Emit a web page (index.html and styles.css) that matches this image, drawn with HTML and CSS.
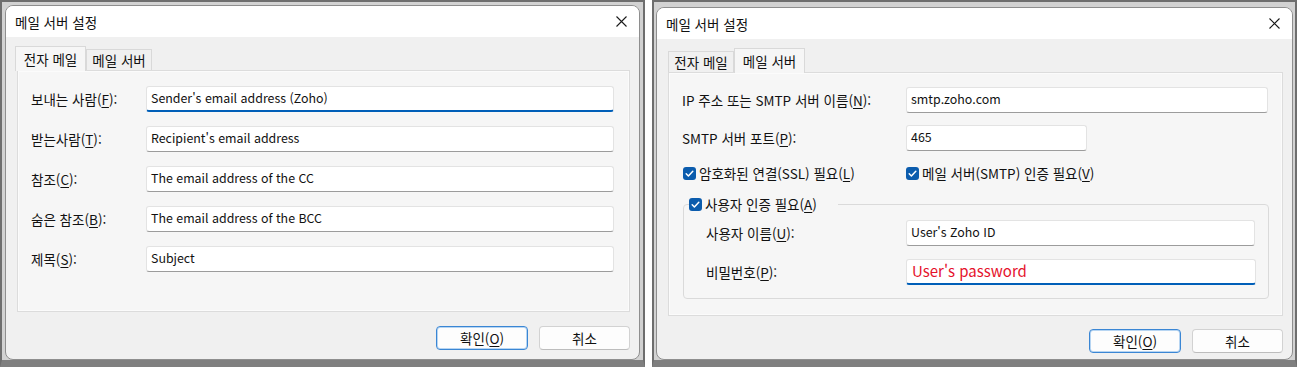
FILE: index.html
```html
<!DOCTYPE html>
<html lang="ko">
<head>
<meta charset="utf-8">
<title>메일 서버 설정</title>
<link rel="stylesheet" href="styles.css">
</head>
<body>
<div class="screen">
  <div class="frame frame-left">
    <div class="dialog">
      <div class="titlebar">
        <span class="title">메일 서버 설정</span>
        <svg class="close" width="11" height="11" viewBox="0 0 11 11"><path d="M0.5 0.5L10.5 10.5M10.5 0.5L0.5 10.5" stroke="#1a1a1a" stroke-width="1.1" fill="none"/></svg>
      </div>
      <div class="body">
        <div class="tabs">
          <div class="tab active first">전자 메일</div>
          <div class="tab">메일 서버</div>
        </div>
        <div class="panel panel-mail">
          <div class="row"><span class="row-label">보내는 사람(<u>F</u>):</span><div class="field focus">Sender's email address (Zoho)</div></div>
          <div class="row"><span class="row-label">받는사람(<u>T</u>):</span><div class="field">Recipient's email address</div></div>
          <div class="row"><span class="row-label">참조(<u>C</u>):</span><div class="field">The email address of the CC</div></div>
          <div class="row"><span class="row-label">숨은 참조(<u>B</u>):</span><div class="field">The email address of the BCC</div></div>
          <div class="row"><span class="row-label">제목(<u>S</u>):</span><div class="field">Subject</div></div>
        </div>
        <div class="buttons buttons-left">
          <div class="btn default">확인(<u>O</u>)</div>
          <div class="btn cancel">취소</div>
        </div>
      </div>
    </div>
  </div>
  <div class="frame frame-right">
    <div class="dialog">
      <div class="titlebar">
        <span class="title">메일 서버 설정</span>
        <svg class="close" width="11" height="11" viewBox="0 0 11 11"><path d="M0.5 0.5L10.5 10.5M10.5 0.5L0.5 10.5" stroke="#1a1a1a" stroke-width="1.1" fill="none"/></svg>
      </div>
      <div class="body">
        <div class="tabs">
          <div class="tab">전자 메일</div>
          <div class="tab active">메일 서버</div>
        </div>
        <div class="panel panel-server">
          <div class="row"><span class="row-label wide">IP 주소 또는 SMTP 서버 이름(<u>N</u>):</span><div class="field f-ip">smtp.zoho.com</div></div>
          <div class="row r-port"><span class="row-label wide">SMTP 서버 포트(<u>P</u>):</span><div class="field f-port">465</div></div>
          <div class="row r-checks">
            <span class="check wide first-check"><span class="cb"><svg width="13" height="13" viewBox="0 0 13 13"><path d="M3.2 6.8L5.4 9L9.8 4.3" stroke="#fff" stroke-width="1.5" fill="none" stroke-linecap="round" stroke-linejoin="round"/></svg></span><span class="check-text">암호화된 연결(SSL) 필요(<u>L</u>)</span></span>
            <span class="check"><span class="cb"><svg width="13" height="13" viewBox="0 0 13 13"><path d="M3.2 6.8L5.4 9L9.8 4.3" stroke="#fff" stroke-width="1.5" fill="none" stroke-linecap="round" stroke-linejoin="round"/></svg></span><span class="check-text">메일 서버(SMTP) 인증 필요(<u>V</u>)</span></span>
          </div>
          <fieldset class="group">
            <legend class="check legend"><span class="cb"><svg width="13" height="13" viewBox="0 0 13 13"><path d="M3.2 6.8L5.4 9L9.8 4.3" stroke="#fff" stroke-width="1.5" fill="none" stroke-linecap="round" stroke-linejoin="round"/></svg></span><span class="check-text">사용자 인증 필요(<u>A</u>)</span></legend>
            <div class="group-rows">
              <div class="row"><span class="row-label inner">사용자 이름(<u>U</u>):</span><div class="field f-user">User's Zoho ID</div></div>
              <div class="row r-pass"><span class="row-label inner">비밀번호(<u>P</u>):</span><div class="field f-pass focus">User's password</div></div>
            </div>
          </fieldset>
        </div>
        <div class="buttons buttons-right">
          <div class="btn default">확인(<u>O</u>)</div>
          <div class="btn cancel">취소</div>
        </div>
      </div>
    </div>
  </div>
</div>
</body>
</html>
```
FILE: styles.css
```css
* { box-sizing: border-box; }
html, body { margin: 0; padding: 0; background: #ffffff; }
body {
  font-family: "Noto Sans CJK KR", "Noto Sans", sans-serif;
  font-size: 13.5px;
  color: #111111;
}
u { text-decoration: underline; text-underline-offset: 2px; text-decoration-thickness: 1px; }

.screen { display: flex; width: 1297px; height: 367px; overflow: hidden; }

.frame {
  width: 645px;
  height: 367px;
  border: 2px solid #6e6e6e;
  border-bottom: 7px solid #7f7f7f;
  background: #d2d2d2;
  display: flex;
}
.frame-left { margin-right: 7px; padding: 3px 3px 0 3px; }
.frame-right { padding: 5px 2px 0 2px; }

.dialog {
  flex: 1;
  border: 1px solid #8e8e8e;
  border-radius: 8px;
  background: #f0f0f0;
  display: flex;
  flex-direction: column;
  overflow: hidden;
}

.titlebar {
  height: 31px;
  flex: none;
  background: #ffffff;
  display: flex;
  align-items: center;
  justify-content: space-between;
  padding: 0 12px 0 9px;
}
.title { color: #111111; }
.close { display: block; }

.body { padding: 9px 9px 0 11px; display: flex; flex-direction: column; }

.tabs { display: flex; align-items: flex-end; height: 24px; }
.tab {
  width: 66px;
  height: 21px;
  border: 1px solid #d9d9d9;
  border-bottom: none;
  background: #f0f0f0;
  display: flex;
  align-items: center;
  justify-content: center;
}
.tab.active {
  width: 71px;
  height: 25px;
  margin-bottom: -1px;
  background: #f6f6f6;
  position: relative;
  z-index: 1;
  padding-bottom: 1px;
}
.tab.first { margin-left: -2px; }

.panel {
  border: 1px solid #dcdcdc;
  background: #f6f6f6;
  box-shadow: inset 0 0 0 1px #fbfbfb;
}
.panel-mail { height: 242px; padding: 15px 0 0 13px; }
.panel-server { height: 244px; padding: 14px 0 0 13px; }

.row { display: flex; align-items: center; }
.panel-mail .row + .row { margin-top: 14px; }
.row-label { width: 115px; flex: none; }
.row-label.wide { width: 224px; }
.row-label.inner { width: 200px; }

.field {
  height: 26px;
  width: 468px;
  background: #ffffff;
  border: 1px solid #e3e3e3;
  border-bottom-color: #9c9c9c;
  border-radius: 3px;
  padding: 0 4px;
  font-size: 12.4px;
  line-height: 22px;
  white-space: nowrap;
  color: #111111;
}
.field.focus { border-bottom: 2px solid #005fb8; }
.f-ip { width: 362px; }
.f-port { width: 181px; }
.f-user { width: 349px; }
.f-pass { width: 350px; color: #e5112b; font-size: 15px; padding-left: 5px; }

.r-port { margin-top: 12px; }
.r-checks { margin-top: 14px; height: 16px; }

.check { display: inline-flex; align-items: center; gap: 3px; white-space: nowrap; }
.check.wide { width: 224px; }
.first-check { padding-left: 1px; }
.cb {
  width: 13px;
  height: 13px;
  border-radius: 3px;
  background: #0b5cad;
  display: inline-flex;
  flex: none;
}
.cb svg { display: block; }

.group {
  margin: 15px 0 0 1px;
  width: 585px;
  border: 1px solid #dadada;
  border-radius: 4px;
  padding: 8px 12px 13px 5px;
}
.legend { padding: 0 21px 0 0; height: 16px; }
.group-rows { padding-left: 17px; }
.r-pass { margin-top: 13px; }

.buttons { display: flex; justify-content: flex-end; gap: 11px; }
.buttons-left { margin-top: 14px; }
.buttons-right { margin-top: 13px; }
.btn {
  height: 24px;
  width: 91px;
  background: #fdfdfd;
  border: 1px solid #d2d2d2;
  border-bottom-color: #bdbdbd;
  border-radius: 4px;
  display: flex;
  align-items: center;
  justify-content: center;
}
.btn.default {
  width: 92px;
  border: 1px solid #3a86d4;
  box-shadow: inset 0 0 0 1px #b7d5f2;
}
```
